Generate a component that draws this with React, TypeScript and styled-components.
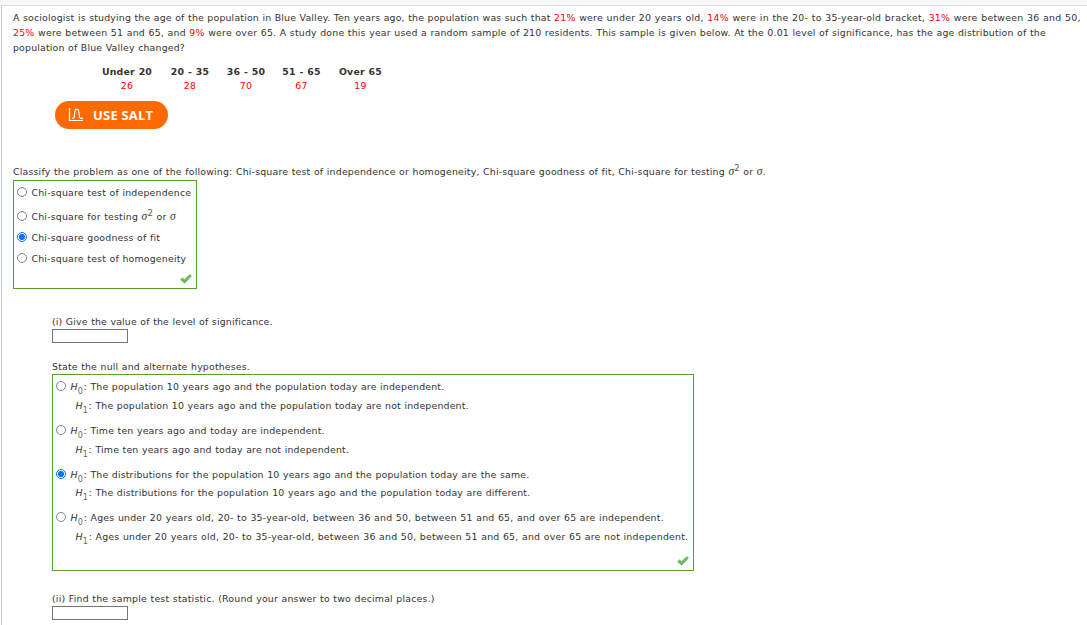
import { useState } from "react";
import styled, { createGlobalStyle } from "styled-components";

const GlobalStyle = createGlobalStyle`
    * {
        box-sizing: border-box;
    }
    body {
        margin: 0;
        background-color: #fff;
        overflow: hidden;
    }
`;

const Wrapper = styled.div`
    height: 625px;
    display: flex;
    flex-direction: column;
    font-family: Verdana, "DejaVu Sans", sans-serif;
    font-size: 9.4px;
    line-height: 15px;
    word-spacing: 0.3px;
    color: #333;
    white-space: nowrap;
`;

const TopBar = styled.div`
    height: 6px;
    flex: none;
    background-color: #f7f7f7;
    border-bottom: 1px solid #ddd;
`;

const Content = styled.main`
    flex: 1;
    margin-left: 1px;
    padding: 4px 0 0 11px;
    border-left: 1px solid #ccc;
`;

const Line = styled.div<{ $track?: number }>`
    height: 15px;
    letter-spacing: ${({ $track }) => $track ?? 0.19}px;
`;

const Tracked = styled.span<{ $track: number }>`
    letter-spacing: ${({ $track }) => $track}px;
`;

const Red = styled.span`
    color: #f00;
`;

const SampleTable = styled.div`
    display: grid;
    grid-template-columns: 64px 62px 50px 61px 57px;
    width: max-content;
    margin: 9px 0 0 82px;
    text-align: center;
    line-height: 15px;
    letter-spacing: 0.2px;
`;

const Head = styled.div`
    font-weight: bold;
    height: 14px;
    line-height: 15px;
`;

const SaltButton = styled.button`
    display: flex;
    align-items: center;
    width: 113px;
    height: 28px;
    margin: 8px 0 0 42px;
    padding: 0 0 0 13px;
    gap: 9px;
    border: none;
    border-radius: 14px;
    background-color: #ff6a00;
    color: #fff;
    font: bold 13px/28px "Open Sans", sans-serif;
    letter-spacing: 0.2px;
    word-spacing: 0;
`;

const Classify = styled.div`
    margin: 35px 0 1px;
`;

const AnswerBox = styled.div<{ $width: number; $height: number }>`
    display: flex;
    flex-direction: column;
    width: ${({ $width }) => $width}px;
    height: ${({ $height }) => $height}px;
    border: 1px solid #5a9e32;
    padding: 4px 0 0 3px;
`;

const Option = styled.label<{ $height: number }>`
    display: flex;
    align-items: flex-start;
    height: ${({ $height }) => $height}px;
    flex: none;
`;

const Radio = styled.input`
    appearance: none;
    flex: none;
    width: 10px;
    height: 10px;
    margin: 2px 4.5px 0 0;
    border: 1px solid #858585;
    border-radius: 50%;
    background-color: #fff;

    &:checked {
        border-color: #0075ff;
        background: radial-gradient(circle, #0075ff 2.7px, #fff 3.4px);
    }
`;

const Hypotheses = styled.div`
    display: flex;
    flex-direction: column;
`;

const Alternate = styled(Line)<{ $gap: number }>`
    margin: ${({ $gap }) => $gap}px 0 0 5px;
`;

const Sigma = styled.i`
    font-family: "Liberation Serif", serif;
    font-size: 11.5px;
    line-height: 0;
`;

const Sup = styled.sup`
    font-size: 8.5px;
    line-height: 0;
    vertical-align: 4px;
    color: #555;
`;

const Sub = styled.sub`
    font-size: 8px;
    line-height: 0;
    vertical-align: -4px;
    margin-right: 0.6px;
    color: #666;
`;

const Check = styled.svg`
    display: block;
    width: 12px;
    height: 10px;
    margin: auto 4px 4px auto;
`;

const Part = styled.section<{ $top: number }>`
    margin: ${({ $top }) => $top}px 0 0 39px;
`;

const Answer = styled.input`
    display: block;
    width: 76px;
    height: 14px;
    padding: 0 2px;
    border: 1px solid #767676;
    font-size: 10px;
`;

const kinds = [
    { label: "Chi-square test of independence", height: 24 },
    { label: <>Chi-square for testing <Sigma>σ</Sigma><Sup>2</Sup> or <Sigma>σ</Sigma></>, height: 21 },
    { label: "Chi-square goodness of fit", height: 21 },
    { label: "Chi-square test of homogeneity", height: 21 }
];

const hypotheses = [
    {
        h0: "The population 10 years ago and the population today are independent.",
        h1: "The population 10 years ago and the population today are not independent.",
        height: 44,
        gap: 4,
        track: 0.17
    },
    {
        h0: "Time ten years ago and today are independent.",
        h1: "Time ten years ago and today are not independent.",
        height: 44,
        gap: 4,
        track: 0.18
    },
    {
        h0: "The distributions for the population 10 years ago and the population today are the same.",
        h1: "The distributions for the population 10 years ago and the population today are different.",
        height: 43,
        gap: 3,
        track: 0.175
    },
    {
        h0: "Ages under 20 years old, 20- to 35-year-old, between 36 and 50, between 51 and 65, and over 65 are independent.",
        h1: "Ages under 20 years old, 20- to 35-year-old, between 36 and 50, between 51 and 65, and over 65 are not independent.",
        height: 44,
        gap: 4,
        track: 0.21
    }
];

const samples = [
    ["Under 20", 26],
    ["20 - 35", 28],
    ["36 - 50", 70],
    ["51 - 65", 67],
    ["Over 65", 19]
];

function CheckMark() {
    return (
        <Check viewBox="0 0 12 10">
            <path d="M.7 5.7 2.5 4l2 1.7L9.8.7l1.6 1.2-6.7 7.2z" fill="#6dba60" stroke="#4b9b42" strokeWidth=".7" />
        </Check>
    );
}

function App() {
    const [kind, setKind] = useState(2);
    const [hypothesis, setHypothesis] = useState(2);

    return (
        <Wrapper>
            <GlobalStyle />
            <TopBar />
            <Content>
                <Line $track={0.255}><Tracked $track={0.168}>A sociologist is studying the age of the population in Blue Valley. Ten years ago, the population was such that </Tracked><Red>21%</Red> were under 20 years old, <Red>14%</Red> were in the 20- to 35-year-old bracket, <Red>31%</Red> were between 36 and 50,</Line>
                <Line $track={0.185}><Tracked $track={0.22}><Red>25%</Red> were between 51 and 65, and <Red>9%</Red> were over 65. </Tracked>A study done this year used a random sample of 210 residents. This sample is given below. At the 0.01 level of significance, has the age distribution of the</Line>
                <Line $track={0.17}>population of Blue Valley changed?</Line>
                <SampleTable>
                    {samples.map(([name]) => <Head key={name}>{name}</Head>)}
                    {samples.map(([name, count]) => <Red key={name}>{count}</Red>)}
                </SampleTable>
                <SaltButton>
                    <svg width="16" height="15" viewBox="0 0 16 15" fill="none" stroke="#fff" strokeWidth="1.2">
                        <path d="M1.5 0v12.5H15M4 10.3h1.2C7.6 10.3 5.7 1.4 8 1.4h1.5c2.3 0 .8 8.9 3.2 8.9H15" />
                    </svg>
                    USE SALT
                </SaltButton>
                <Classify>
                    <Line>Classify the problem as one of the following: Chi-square test of independence or homogeneity, Chi-square goodness of fit, Chi-square for testing <Sigma>σ</Sigma><Sup>2</Sup> or <Sigma>σ</Sigma>.</Line>
                </Classify>
                <AnswerBox $width={184} $height={109}>
                    {kinds.map(({ label, height }, idx) => (
                        <Option key={idx} $height={height}>
                            <Radio type="radio" name="kind" checked={kind === idx} onChange={() => setKind(idx)} />
                            <Line>{label}</Line>
                        </Option>
                    ))}
                    <CheckMark />
                </AnswerBox>
                <Part $top={25}>
                    <Line $track={0.165}>(i) Give the value of the level of significance.</Line>
                    <Answer />
                </Part>
                <Part $top={16}>
                    <Line $track={0.175}>State the null and alternate hypotheses.</Line>
                    <AnswerBox $width={642} $height={197}>
                        {hypotheses.map(({ h0, h1, height, gap, track }, idx) => (
                            <Option key={h0} $height={height}>
                                <Radio type="radio" name="hypothesis" checked={hypothesis === idx} onChange={() => setHypothesis(idx)} />
                                <Hypotheses>
                                    <Line $track={track}><i>H</i><Sub>0</Sub>: {h0}</Line>
                                    <Alternate $gap={gap} $track={track}><i>H</i><Sub>1</Sub>: {h1}</Alternate>
                                </Hypotheses>
                            </Option>
                        ))}
                        <CheckMark />
                    </AnswerBox>
                </Part>
                <Part $top={20}>
                    <Line $track={0.2}>(ii) Find the sample test statistic. (Round your answer to two decimal places.)</Line>
                    <Answer />
                </Part>
            </Content>
        </Wrapper>
    );
}

export default App;
